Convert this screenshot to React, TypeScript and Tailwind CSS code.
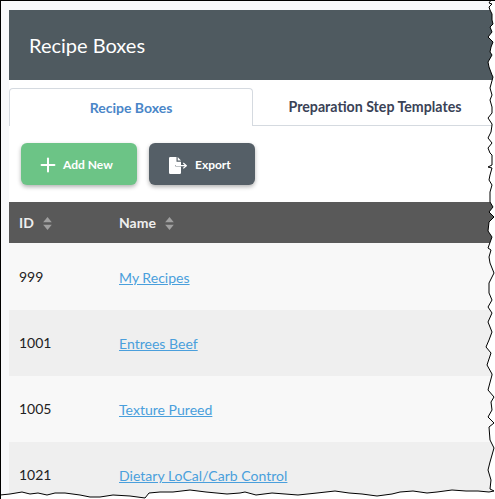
import React from 'react';
import { Plus } from 'lucide-react';

const rows = [
  { id: '999', name: 'My Recipes' },
  { id: '1001', name: 'Entrees Beef' },
  { id: '1005', name: 'Texture Pureed' },
  { id: '1021', name: 'Dietary LoCal/Carb Control' },
];

// torn edge, traced from the screenshot
const rightEdge = [
  [491, 0], [489, 3], [492, 4], [489, 7], [490, 10], [492, 14], [492, 20], [493, 24], [490, 27], [492, 32], [488, 37], [493, 42],
  [491, 47], [490, 52], [492, 55], [488, 62], [489, 67], [492, 75], [493, 77], [490, 88], [492, 95], [490, 100], [492, 107],
  [492, 113], [488, 118], [492, 124], [492, 125], [491, 132], [488, 138], [492, 143], [488, 148], [490, 153], [492, 155], [492, 165],
  [488, 167], [492, 168], [490, 175], [489, 180], [492, 185], [490, 192], [490, 202], [493, 207], [489, 212], [494, 217], [489, 222],
  [488, 231], [492, 237], [488, 248], [491, 250], [489, 257], [490, 263], [494, 273], [489, 283], [489, 293], [492, 300], [488, 307],
  [492, 313], [488, 322], [492, 332], [489, 340], [486, 347], [491, 353], [487, 365], [492, 374], [492, 375], [488, 390], [494, 397],
  [491, 402], [492, 410], [488, 417], [494, 423], [489, 427], [490, 440], [494, 448], [490, 462], [488, 470], [491, 480], [490, 489],
  [494, 491],
];
const bottomEdge = [
  [489, 492], [478, 491], [466, 491], [452, 490], [437, 492], [427, 493], [413, 491], [400, 492], [392, 494], [377, 496], [362, 494],
  [349, 493], [335, 491], [317, 493], [298, 495], [272, 493], [256, 495], [245, 492], [240, 493], [227, 494], [206, 492],
  [190, 490], [173, 492], [160, 492], [149, 493], [145, 498], [130, 496], [113, 495], [100, 497], [90, 497], [80, 495], [65, 493],
  [55, 493], [47, 495], [38, 493], [30, 494], [22, 492], [10, 494], [0, 495],
];
const tearLine = [...rightEdge, ...bottomEdge].map(([x, y]) => `${x},${y}`).join(' ');

const SortIcon = () => (
  <svg width="9" height="13" viewBox="0 0 9 13" className="ml-[9px] mt-[1px]" fill="#a0a0a0">
    <path d="M4.5 0 L8.8 5.2 H0.2 Z" />
    <path d="M4.5 13 L8.8 7.8 H0.2 Z" />
  </svg>
);

const ExportIcon = () => (
  <svg width="18" height="17" viewBox="0 0 18 17" fill="none">
    <path d="M0 1.2 A1.2 1.2 0 0 1 1.2 0 H7.5 V4.8 H12 V8 H6.5 V9.5 H12 V15.8 A1.2 1.2 0 0 1 10.8 17 H1.2 A1.2 1.2 0 0 1 0 15.8 Z" fill="#fff" />
    <path d="M8.7 0 L12 3.4 H8.7 Z" fill="#fff" />
    <path d="M7 8.7 H17 M14.3 6 L17.3 8.7 L14.3 11.4" stroke="#fff" strokeWidth="1.2" />
  </svg>
);

export default function App() {
  return (
    <div className="relative w-[495px] h-[499px] overflow-hidden bg-[#f8f9fb] border-t border-l border-black font-['Lato','Open_Sans',sans-serif]">
      <div className="ml-[8px] mt-[9px] w-[500px] bg-white">
        <div className="h-[70px] bg-[#4f5a60] pl-[20px] flex items-center">
          <h1 className="text-[20px] leading-none text-white">Recipe Boxes</h1>
        </div>

        <div className="flex pt-[8px] h-[46px]">
          <div className="w-[244px] border border-b-0 border-[#d5dae0] rounded-t-[4px] flex items-center justify-center text-[14px] font-bold text-[#4a86c8]">
            Recipe Boxes
          </div>
          <div className="w-[244px] border-b border-[#d5dae0] flex items-center justify-center text-[14.2px] font-bold text-[#3a4256]">
            Preparation Step Templates
          </div>
        </div>

        <div className="flex gap-[12px] pl-[12px] pt-[17px] pb-[17px]">
          <button className="w-[116px] h-[42px] pt-[2px] pl-[16px] rounded-[6px] bg-[#6cc486] text-white text-[12px] font-bold flex items-center gap-[4px] shadow-[0_2px_4px_rgba(0,0,0,0.3)]">
            <Plus size={22} strokeWidth={2.2} />
            Add New
          </button>
          <button className="w-[106px] h-[42px] pt-[2px] pl-[20px] rounded-[6px] bg-[#555f67] text-white text-[12px] font-bold flex items-center gap-[8px] shadow-[0_2px_4px_rgba(0,0,0,0.3)]">
            <ExportIcon />
            Export
          </button>
        </div>

        <div className="h-[41px] bg-[#595959] flex items-center text-[14px] font-bold text-[#eeeeee]">
          <div className="w-[110px] pl-[10px] flex items-center">
            ID
            <SortIcon />
          </div>
          <div className="flex items-center">
            Name
            <SortIcon />
          </div>
        </div>

        {rows.map((row, index) => (
          <div
            key={row.id}
            className={`flex items-center text-[14px] text-[#222222] ${index === 0 ? 'h-[67px]' : 'h-[66px]'} ${index % 2 === 0 ? 'bg-[#f8f8f8]' : 'bg-[#efefef]'}`}
          >
            <div className={`w-[110px] pl-[10px] ${index === 0 ? '' : 'pb-[2px]'}`}>{row.id}</div>
            <div className="pt-[2px]">
              <a href="#" className="text-[14.05px] text-[#4a9fdc] underline">{row.name}</a>
            </div>
          </div>
        ))}
      </div>

      <svg width="495" height="499" viewBox="0 0 495 499" className="absolute -top-px -left-px">
        <polygon points={`${tearLine} 0,499 495,499 495,0`} fill="#fff" />
        <polyline points={tearLine} fill="none" stroke="#000" strokeWidth="1" />
      </svg>
    </div>
  );
}
